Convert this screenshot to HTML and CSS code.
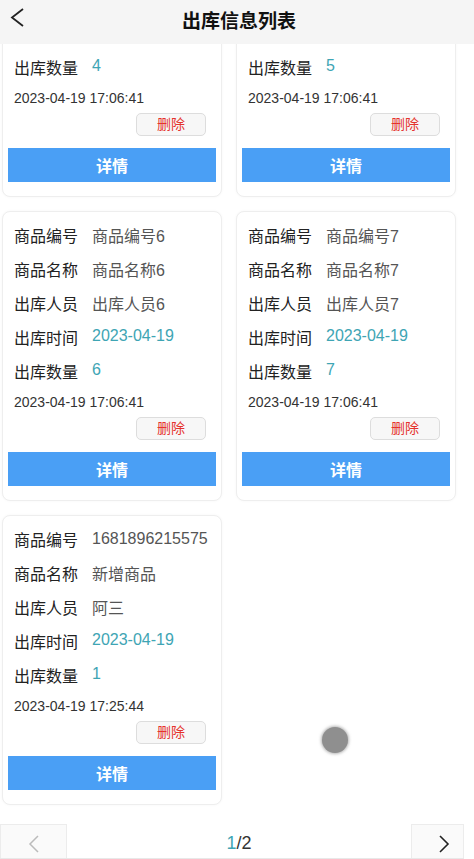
FILE: index.html
```html
<!DOCTYPE html>
<html>
<head>
  <meta charset="UTF-8">
  <title>出库信息列表</title>
  <link rel="stylesheet" href="styles.css">
</head>
<body>
  <div class="page">
    <div class="header">
      <span class="back">
        <svg width="16" height="22" viewBox="0 0 16 22"><polyline points="14,2 3,10.5 14,19" fill="none" stroke="#222" stroke-width="1.8"/></svg>
      </span>
      <h1>出库信息列表</h1>
    </div>

    <div class="main">
      <div class="list">
        <div class="card">
          <div class="row"><span class="label">商品编号</span><span class="val">商品编号4</span></div>
          <div class="row"><span class="label">商品名称</span><span class="val">商品名称4</span></div>
          <div class="row"><span class="label">出库人员</span><span class="val">出库人员4</span></div>
          <div class="row"><span class="label">出库时间</span><span class="val teal">2023-04-19</span></div>
          <div class="row"><span class="label">出库数量</span><span class="val teal">4</span></div>
          <div class="stamp">2023-04-19 17:06:41</div>
          <div class="ops"><button class="del">删除</button></div>
          <button class="detail">详情</button>
        </div>
        <div class="card">
          <div class="row"><span class="label">商品编号</span><span class="val">商品编号5</span></div>
          <div class="row"><span class="label">商品名称</span><span class="val">商品名称5</span></div>
          <div class="row"><span class="label">出库人员</span><span class="val">出库人员5</span></div>
          <div class="row"><span class="label">出库时间</span><span class="val teal">2023-04-19</span></div>
          <div class="row"><span class="label">出库数量</span><span class="val teal">5</span></div>
          <div class="stamp">2023-04-19 17:06:41</div>
          <div class="ops"><button class="del">删除</button></div>
          <button class="detail">详情</button>
        </div>
        <div class="card">
          <div class="row"><span class="label">商品编号</span><span class="val">商品编号6</span></div>
          <div class="row"><span class="label">商品名称</span><span class="val">商品名称6</span></div>
          <div class="row"><span class="label">出库人员</span><span class="val">出库人员6</span></div>
          <div class="row"><span class="label">出库时间</span><span class="val teal">2023-04-19</span></div>
          <div class="row"><span class="label">出库数量</span><span class="val teal">6</span></div>
          <div class="stamp">2023-04-19 17:06:41</div>
          <div class="ops"><button class="del">删除</button></div>
          <button class="detail">详情</button>
        </div>
        <div class="card">
          <div class="row"><span class="label">商品编号</span><span class="val">商品编号7</span></div>
          <div class="row"><span class="label">商品名称</span><span class="val">商品名称7</span></div>
          <div class="row"><span class="label">出库人员</span><span class="val">出库人员7</span></div>
          <div class="row"><span class="label">出库时间</span><span class="val teal">2023-04-19</span></div>
          <div class="row"><span class="label">出库数量</span><span class="val teal">7</span></div>
          <div class="stamp">2023-04-19 17:06:41</div>
          <div class="ops"><button class="del">删除</button></div>
          <button class="detail">详情</button>
        </div>
        <div class="card">
          <div class="row"><span class="label">商品编号</span><span class="val">1681896215575</span></div>
          <div class="row"><span class="label">商品名称</span><span class="val">新增商品</span></div>
          <div class="row"><span class="label">出库人员</span><span class="val">阿三</span></div>
          <div class="row"><span class="label">出库时间</span><span class="val teal">2023-04-19</span></div>
          <div class="row"><span class="label">出库数量</span><span class="val teal">1</span></div>
          <div class="stamp">2023-04-19 17:25:44</div>
          <div class="ops"><button class="del">删除</button></div>
          <button class="detail">详情</button>
        </div>
      </div>
    </div>

    <div class="pager">
      <span class="pg-btn prev">
        <svg width="12" height="20" viewBox="0 0 12 20"><polyline points="10,2 2,10 10,18" fill="none" stroke="#bbb" stroke-width="1.5"/></svg>
      </span>
      <span class="pg-num"><span class="cur">1</span>/2</span>
      <span class="pg-btn next">
        <svg width="12" height="20" viewBox="0 0 12 20"><polyline points="2,2 10,10 2,18" fill="none" stroke="#222" stroke-width="1.6"/></svg>
      </span>
    </div>
  </div>

  <div class="float-ball"></div>
</body>
</html>
```
FILE: styles.css
```css
body {
  margin: 0;
  background: #fff;
  font-family: "Liberation Sans", "Noto Sans CJK SC", sans-serif;
  color: #222;
}

.page {
  height: 100vh;
  display: flex;
  flex-direction: column;
  overflow: hidden;
}

.header {
  height: 44px;
  flex: none;
  background: #f5f5f5;
  display: flex;
  align-items: center;
  justify-content: center;
  position: relative;
  z-index: 2;
}

.header h1 {
  margin: 0 0 0 4px;
  font-size: 19px;
  font-weight: bold;
  color: #111;
  line-height: 40px;
}

.back {
  position: absolute;
  left: 9px;
  top: 7px;
}

.main {
  flex: 1;
  overflow: hidden;
  display: flex;
  flex-direction: column;
  justify-content: flex-end;
  padding-bottom: 19px;
}

.list {
  flex: none;
  display: grid;
  grid-template-columns: 220px 220px;
  column-gap: 14px;
  row-gap: 14px;
  padding-left: 2px;
}

.card {
  box-sizing: border-box;
  height: 290px;
  background: #fff;
  border: 1px solid #eee;
  border-radius: 8px;
  box-shadow: 0 0 3px rgba(0,0,0,0.04);
  padding: 6px 5px 14px 5px;
}

.row {
  height: 34px;
  display: flex;
  align-items: center;
  padding-left: 6px;
  font-size: 16px;
  white-space: nowrap;
}

.label {
  color: #222;
  width: 78px;
  flex: none;
}

.val {
  color: #555;
}

.val.teal {
  color: #3ea5b4;
  margin-top: -3px;
}

.stamp {
  height: 28px;
  line-height: 28px;
  padding-left: 6px;
  font-size: 14px;
  color: #333;
}

.ops {
  display: flex;
  justify-content: flex-end;
  padding-right: 10px;
  margin-top: 1px;
}

.del {
  width: 70px;
  height: 23px;
  padding: 0;
  background: #f7f7f7;
  border: 1px solid #ddd;
  border-radius: 5px;
  color: #e5322d;
  font-size: 14px;
  font-family: inherit;
  line-height: 21px;
}

.detail {
  display: block;
  width: 100%;
  height: 34px;
  margin-top: 12px;
  background: #4a9ff5;
  border: none;
  color: #fff;
  font-size: 16px;
  font-weight: bold;
  font-family: inherit;
  padding: 0;
}

.pager {
  flex: none;
  height: 35px;
  display: flex;
  align-items: stretch;
  margin-right: 10px;
  border-bottom: 1px solid #e8e8e8;
  box-sizing: border-box;
}

.pg-btn {
  box-sizing: border-box;
  display: flex;
  align-items: center;
  justify-content: center;
  background: #fafafa;
  border: 1px solid #ececec;
  border-bottom: none;
  padding-top: 4px;
}

.prev {
  width: 67px;
}

.next {
  width: 53px;
  padding-left: 12px;
}

.pg-num {
  flex: 1;
  text-align: center;
  font-size: 18px;
  line-height: 38px;
  color: #333;
}

.cur {
  color: #3ea5b4;
}

.float-ball {
  position: fixed;
  left: 322px;
  top: 727px;
  width: 26px;
  height: 26px;
  border-radius: 50%;
  background: #8f8f8f;
  box-shadow: 0 0 3px 1px rgba(150,150,150,0.7);
}
```
